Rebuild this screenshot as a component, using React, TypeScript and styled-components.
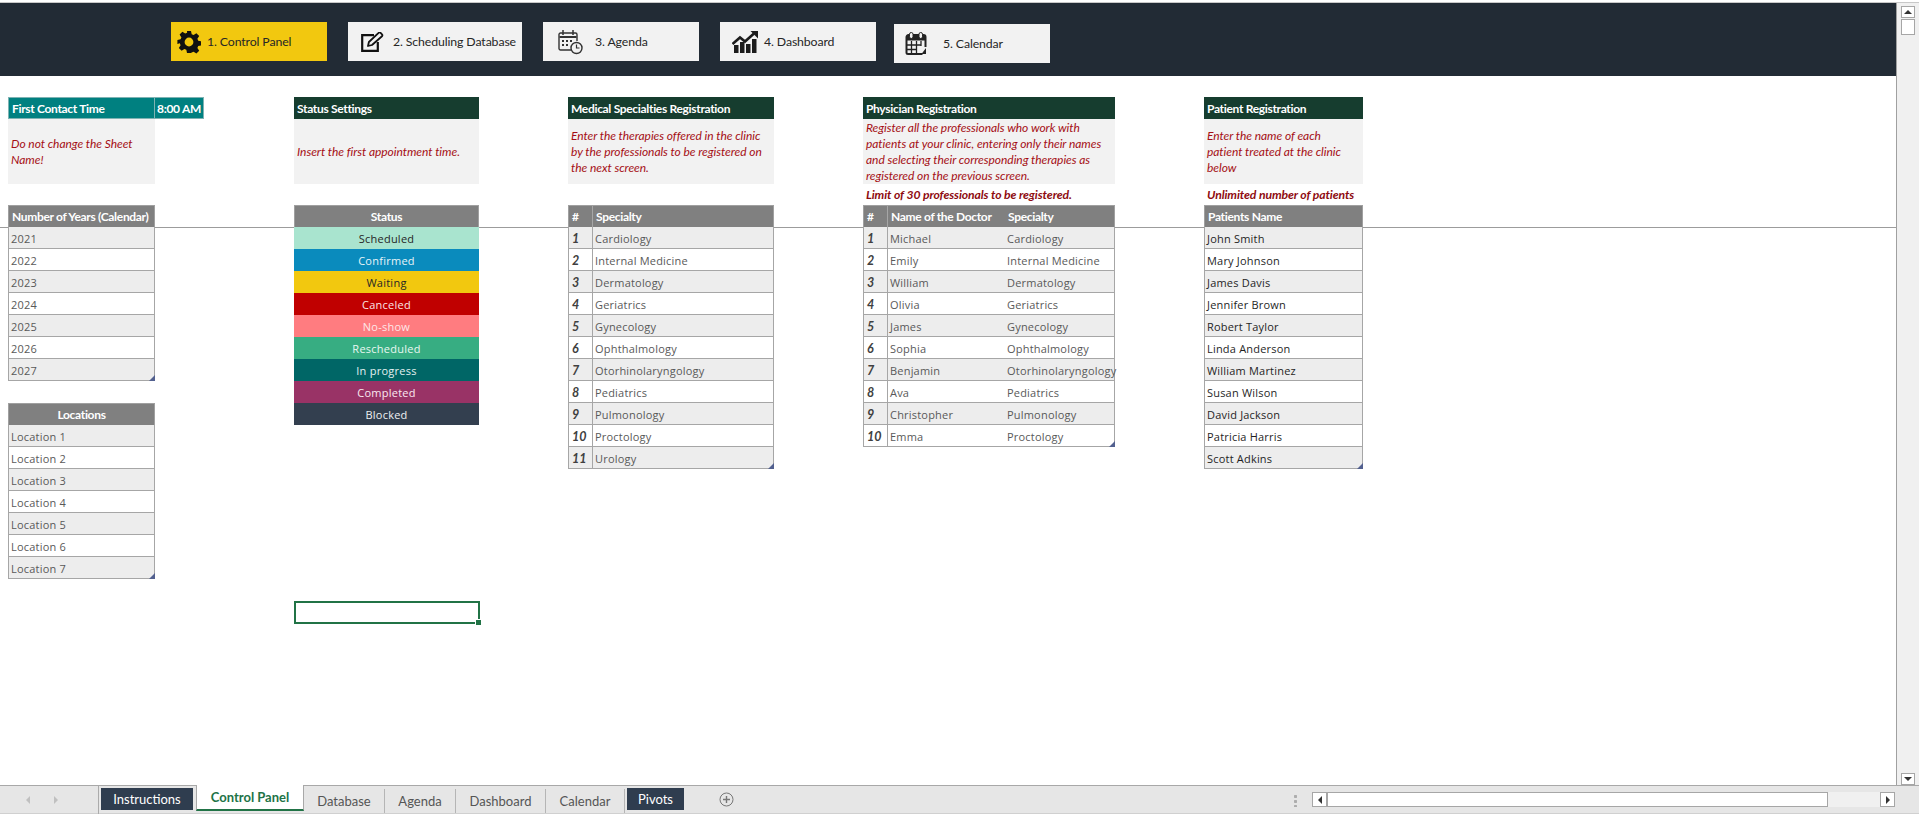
import React from "react";
import styled, { createGlobalStyle, css } from "styled-components";

const Global = createGlobalStyle`
  html, body { margin: 0; padding: 0; height: 100%; overflow: hidden; background: #fff; }
  #root { height: 100%; }
  * { box-sizing: border-box; }
`;
const FONT = `Lato, "Open Sans", "Liberation Sans", sans-serif`;
const BODY = `"Open Sans", "Liberation Sans", sans-serif`;

const Page = styled.div`
  width: 100%; height: 100vh; display: flex; flex-direction: column; background: #fff; font-family: ${FONT}; overflow: hidden;
`;
const Main = styled.div`flex: 1; min-height: 0; display: flex; border-top: 1px solid #c8c8c8; margin-top: 2px;`;
const Sheet = styled.div`
  width: 1897px; display: flex; flex-direction: column; border-right: 1px solid #a0a0a0;
  background: linear-gradient(#9c9c9c, #9c9c9c) 0 224px / 100% 1px no-repeat #fff;
`;
const Banner = styled.div`height: 73px; background: #222b35; display: flex; align-items: flex-start; padding: 19px 0 0 171px; flex: none;`;
const NavButton = styled.div<{ $w: number; $active?: boolean; $drop?: boolean; $pad: number; $gap: number; $after: number }>`
  width: ${p => p.$w}px; height: 39px; flex: none; display: flex; align-items: center;
  margin-right: ${p => p.$after}px; padding-left: ${p => p.$pad}px; gap: ${p => p.$gap}px;
  background: ${p => (p.$active ? "#f2c80f" : "#f2f2f2")};
  color: #262626; font-size: 12.3px; letter-spacing: -0.12px; white-space: nowrap;
  ${p => p.$drop && css`margin-top: 2px;`}
  svg { flex: none; }
`;
const Columns = styled.div`display: flex; gap: 89px; padding: 21px 0 0 8px; align-items: flex-start;`;
const Col = styled.div<{ $w: number }>`width: ${p => p.$w}px; flex: none; display: flex; flex-direction: column;`;
const TitleRow = styled.div`display: flex; height: 22px;`;
const Title = styled.div<{ $teal?: boolean }>`
  height: 22px; flex: none; white-space: nowrap; width: ${p => (p.$teal ? "147px" : "auto")};
  display: flex; align-items: center; padding-left: 3px; color: #fff; font-weight: 700; font-size: 12px; letter-spacing: -0.32px;
  background: ${p => (p.$teal ? "#008080" : "#163d2f")};
  ${p => p.$teal && css`border: 1px solid #7fb3b3;`}
`;
const TimeCell = styled(Title)`width: 49px; background: #008080; border: 1px solid #7fb3b3; border-left: 0; padding-left: 2px;`;
const Note = styled.div<{ $w?: number }>`
  height: 65px; background: #f2f2f2; display: flex; align-items: center; padding: 0 3px;
  width: ${p => (p.$w ? `${p.$w}px` : "auto")};
  color: #a50f15; font-style: italic; font-size: 12px; letter-spacing: -0.05px; line-height: 16px;
`;
const Limit = styled.div`height: 21px; display: flex; align-items: center; padding-left: 3px; white-space: nowrap; color: #8e0b10; font-style: italic; font-weight: 700; font-size: 12.2px; letter-spacing: -0.1px;`;
const Spacer = styled.div`height: 21px;`;
const Table = styled.div<{ $w?: number }>`
  position: relative; width: ${p => (p.$w ? `${p.$w}px` : "auto")}; display: flex; flex-direction: column;
`;
const Head = styled.div<{ $cols?: string; $center?: boolean }>`
  height: 22px; display: grid; grid-template-columns: ${p => p.$cols || "1fr"}; align-items: center; white-space: nowrap;
  background: #808080; color: #fff; font-weight: 700; font-size: 12px; letter-spacing: -0.32px;
  border: 1px solid #a0a0a0; border-bottom: 0;
  text-align: ${p => (p.$center ? "center" : "left")};
`;
const HeadCell = styled.div<{ $pad?: number; $divide?: boolean }>`
  padding-left: ${p => p.$pad ?? 3}px; height: 100%; display: flex; align-items: center;
  ${p => p.$divide && "border-right: 1px solid #a6a6a6;"}
`;
const Row = styled.div<{ $cols?: string; $odd: boolean }>`
  height: 22px; display: grid; grid-template-columns: ${p => p.$cols || "1fr"}; align-items: center;
  background: ${p => (p.$odd ? "#ededed" : "#fff")};
  border: 1px solid #a6a6a6; border-top: 0;
`;
const Cell = styled.div<{ $dark?: boolean; $pad?: number }>`
  height: 100%; display: flex; align-items: center; white-space: nowrap; padding: 1px 0 0 ${p => p.$pad ?? 2}px;
  font-family: ${BODY}; font-size: 11px; letter-spacing: 0.2px; color: ${p => (p.$dark ? "#1f1f1f" : "#595959")};
`;
const NumCell = styled.div`
  height: 100%; display: flex; align-items: center; padding: 1px 0 0 3px; border-right: 1px solid #a6a6a6;
  font-style: italic; font-weight: 700; font-size: 12.5px; color: #404040;
`;
const Resize = styled.span`
  position: absolute; right: 0; bottom: 0; width: 6px; height: 6px; background: #52608f;
  clip-path: polygon(100% 0, 100% 100%, 0 100%);
`;
const SubTable = styled(Table)`margin-top: 22px;`;
const StatusRow = styled.div<{ $bg: string; $fg: string }>`
  height: 22px; display: flex; align-items: center; justify-content: center;
  background: ${p => p.$bg}; color: ${p => p.$fg}; font-family: ${BODY}; font-size: 11px; letter-spacing: 0.25px;
`;
const Selected = styled.div`
  position: relative; margin-top: 176px; height: 23px; width: 186px; margin-left: -0.5px; border: 2px solid #217346;
`;
const Handle = styled.span`position: absolute; right: -3px; bottom: -3px; width: 5px; height: 5px; background: #217346; outline: 1px solid #fff;`;

const VScroll = styled.div`flex: 1; background: #f0f0f0; display: flex; flex-direction: column; align-items: center; padding: 3px 3px 0 2px; gap: 1px;`;
const ArrowBtn = styled.div<{ $dir: "up" | "down" | "left" | "right"; $w?: number; $h?: number }>`
  width: ${p => p.$w ?? 14}px; height: ${p => p.$h ?? 12}px; background: #fff; border: 1px solid #a6a6a6; flex: none;
  display: flex; align-items: center; justify-content: center;
  &::after {
    content: ""; width: 0; height: 0; border-style: solid;
    ${p => p.$dir === "up" && "border-width: 0 4px 4px 4px; border-color: transparent transparent #333 transparent;"}
    ${p => p.$dir === "down" && "border-width: 4px 4px 0 4px; border-color: #333 transparent transparent transparent;"}
    ${p => p.$dir === "left" && "border-width: 4px 4px 4px 0; border-color: transparent #333 transparent transparent;"}
    ${p => p.$dir === "right" && "border-width: 4px 0 4px 4px; border-color: transparent transparent transparent #333;"}
  }
`;
const VThumb = styled.div`width: 14px; height: 16px; background: #fff; border: 1px solid #a6a6a6; flex: none;`;
const VGap = styled.div`flex: 1;`;

const TabBar = styled.div`
  height: 29px; flex: none; display: flex; align-items: flex-start; background: #e6e6e6; border-top: 1px solid #a8a8a8; position: relative; border-bottom: 1px solid #d0d0d0;
`;
const TabNav = styled.div`width: 99px; height: 28px; flex: none; display: flex; align-items: center; gap: 24px; padding-left: 26px; border-right: 1px solid #ababab;`;
const NavTri = styled.span<{ $right?: boolean }>`
  width: 0; height: 0; border-style: solid; border-width: 4px ${p => (p.$right ? "0 4px 4px" : "4px 4px 0")};
  border-color: transparent ${p => (p.$right ? "transparent transparent #c0c0c0" : "#c0c0c0 transparent transparent")};
`;
const Tab = styled.div<{ $w: number; $kind: "dark" | "active" | "plain"; $ml?: number }>`
  width: ${p => p.$w}px; flex: none; display: flex; align-items: center; justify-content: center; font-size: 13px;
  margin-left: ${p => p.$ml ?? 0}px;
  ${p => p.$kind === "dark" && css`height: 22px; margin-top: 2px; background: #2f3d4f; color: #fff;`}
  ${p => p.$kind === "plain" && css`height: 24px; margin-top: 3px; color: #555; border-right: 1px solid #b5b5b5;`}
  ${p => p.$kind === "active" && css`height: 26px; margin-top: -1px; background: #fff; color: #217346; font-weight: 700; border-bottom: 2px solid #217346; border-left: 1px solid #a8a8a8; border-right: 1px solid #a8a8a8;`}
`;
const AddTab = styled.div`margin-left: 35px; margin-top: 6px; width: 15px; height: 15px; flex: none; display: flex;`;
const BarRight = styled.div`margin-left: auto; display: flex; align-items: flex-start; padding-right: 24px;`;
const Dots = styled.div`width: 3px; height: 13px; margin: 8px 15px 0 0; flex: none; background: radial-gradient(circle, #adadad 1.4px, transparent 1.5px) 0 0 / 3px 5px repeat-y;`;
const HTrack = styled.div`display: flex; margin-top: 6px; height: 15px; width: 583px; background: #f0f0f0;`;
const HThumb = styled.div`width: 502px; height: 15px; background: #fff; border: 1px solid #a6a6a6; border-left-width: 2px; margin-left: -1px; flex: none;`;
const HGap = styled.div`flex: 1;`;

const Gear = () => (
  <svg width="24" height="24" viewBox="0 0 24 24"><path fill="#111" fillRule="evenodd" d="M10 1h4l.7 3.2 1.9.8 2.8-1.8 2.800 2.800-1.800 2.800.8 1.900 3.200.7v4l-3.200.7-.8 1.900 1.800 2.800-2.800 2.800-2.800-1.800-1.900.8L14 23h-4l-.7-3.200-1.900-.8-2.800 1.800-2.800-2.800 1.800-2.800-.8-1.900L.4 14v-4l3.200-.7.8-1.900L2.600 4.600l2.800-2.800 2.800 1.800 1.900-.8zM12 7.600a4.400 4.400 0 1 0 0 8.800 4.400 4.400 0 0 0 0-8.800z"/></svg>
);
const EditIcon = () => (
  <svg width="24" height="20" viewBox="0 0 24 20" fill="none"><path d="M13 3.200H1.200v15.600h15.600V10" stroke="#111" strokeWidth="2.200"/><path d="M7 14l.9-4L17.600.9c.6-.6 1.400-.6 2 0l1.400 1.400c.6.6.6 1.400 0 2L11 13z" fill="none" stroke="#111" strokeWidth="1.800" strokeLinejoin="round"/></svg>
);
const AgendaIcon = () => (
  <svg width="25" height="26" viewBox="0 0 25 26" fill="none">
    <path d="M15 21H2.500a1.500 1.500 0 0 1-1.500-1.500V5.500A1.500 1.500 0 0 1 2.500 4h15A1.500 1.500 0 0 1 19 5.500V12" stroke="#333" strokeWidth="1.400"/>
    <path d="M5 1v5M15 1v5" stroke="#333" strokeWidth="1.500"/>
    <path d="M1.500 7h17v2h-17z" fill="#333"/>
    <path d="M4 11h2v2H4zM8 11h2v2H8zM12 11h2v2h-2zM4 15h2v2H4zM8 15h2v2H8z" fill="#333"/>
    <circle cx="18.500" cy="19" r="5.500" fill="#f2f2f2" stroke="#333" strokeWidth="1.400"/>
    <path d="M18.500 15.500V19h3" stroke="#333" strokeWidth="1.200"/>
  </svg>
);
const DashIcon = () => (
  <svg width="26" height="22" viewBox="0 0 26 22"><path fill="#1c1c1c" d="M2 14h4.500v8H2zM8 11h4.500v11H8zM14 13h4.500v9H14zM20 8h4.500v14H20z"/><path d="M0.500 13l7.500-6.500 5 4L22 2.500" fill="none" stroke="#1c1c1c" strokeWidth="2.600"/><path fill="#1c1c1c" d="M18.500 0H26v7.500z"/></svg>
);
const CalIcon = () => (
  <svg width="22" height="23" viewBox="0 0 22 23" fill="none">
    <path d="M20.500 15V5a2 2 0 0 0-2-2h-15a2 2 0 0 0-2 2v15.500a1.500 1.500 0 0 0 1.500 1.500h14.500" stroke="#222" strokeWidth="2"/>
    <path d="M1 4h20v4.500H1z" fill="#222"/>
    <rect x="4.500" y="0.500" width="3.500" height="6" rx="1.700" fill="#f2f2f2" stroke="#222"/>
    <rect x="14" y="0.500" width="3.500" height="6" rx="1.700" fill="#f2f2f2" stroke="#222"/>
    <path d="M1 13h15M1 17.500h10M6.500 9v13M11.500 9v13M16 9v5" stroke="#222" strokeWidth="1.300"/>
    <path d="M21 16l-4.500 6H21z" fill="#222"/>
  </svg>
);
const Plus = () => (
  <svg width="15" height="15" viewBox="0 0 15 15" fill="none"><circle cx="7.500" cy="7.500" r="6.500" stroke="#777" strokeWidth="1"/><path d="M7.500 4v7M4 7.500h7" stroke="#777" strokeWidth="1.400"/></svg>
);

const years = ["2021", "2022", "2023", "2024", "2025", "2026", "2027"];
const locations = [1, 2, 3, 4, 5, 6, 7].map(n => `Location ${n}`);
const statuses: [string, string, string][] = [
  ["Scheduled", "#a9e4cf", "#262626"], ["Confirmed", "#0a8bbd", "#e8f4f8"], ["Waiting", "#f2c80f", "#262626"],
  ["Canceled", "#c00000", "#fbe5e5"], ["No-show", "#ff7c80", "#fde8e8"], ["Rescheduled", "#37ad82", "#e9f7f1"],
  ["In progress", "#006666", "#e3f1f1"], ["Completed", "#993366", "#fae9f1"], ["Blocked", "#333f4f", "#eef0f2"],
];
const specialties = ["Cardiology", "Internal Medicine", "Dermatology", "Geriatrics", "Gynecology", "Ophthalmology", "Otorhinolaryngology", "Pediatrics", "Pulmonology", "Proctology", "Urology"];
const doctors = ["Michael", "Emily", "William", "Olivia", "James", "Sophia", "Benjamin", "Ava", "Christopher", "Emma"];
const patients = ["John Smith", "Mary Johnson", "James Davis", "Jennifer Brown", "Robert Taylor", "Linda Anderson", "William Martinez", "Susan Wilson", "David Jackson", "Patricia Harris", "Scott Adkins"];

const SPEC_COLS = "24px 1fr";
const DOC_COLS = "24px 117px 1fr";

export default function App() {
  return (
    <Page>
      <Global />
      <Main>
        <Sheet>
          <Banner>
            <NavButton $w={156} $active $pad={6} $gap={6} $after={21}><Gear />1. Control Panel</NavButton>
            <NavButton $w={174} $pad={13} $gap={8} $after={21}><EditIcon />2. Scheduling Database</NavButton>
            <NavButton $w={156} $pad={15} $gap={12} $after={21}><AgendaIcon />3. Agenda</NavButton>
            <NavButton $w={156} $pad={12} $gap={6} $after={18}><DashIcon />4. Dashboard</NavButton>
            <NavButton $w={156} $drop $pad={11} $gap={16} $after={0}><CalIcon />5. Calendar</NavButton>
          </Banner>
          <Columns>
            <Col $w={197}>
              <TitleRow><Title $teal>First Contact Time</Title><TimeCell>8:00 AM</TimeCell></TitleRow>
              <Note $w={147}>Do not change the Sheet Name!</Note>
              <Spacer />
              <Table $w={147}>
                <Head><HeadCell>Number of Years (Calendar)</HeadCell></Head>
                {years.map((y, i) => <Row key={y} $odd={i % 2 === 0}><Cell>{y}</Cell></Row>)}
                <Resize />
              </Table>
              <SubTable $w={147}>
                <Head $center>Locations</Head>
                {locations.map((l, i) => <Row key={l} $odd={i % 2 === 0}><Cell>{l}</Cell></Row>)}
                <Resize />
              </SubTable>
            </Col>
            <Col $w={185}>
              <Title>Status Settings</Title>
              <Note>Insert the first appointment time.</Note>
              <Spacer />
              <Table>
                <Head $center>Status</Head>
                {statuses.map(([n, bg, fg]) => <StatusRow key={n} $bg={bg} $fg={fg}>{n}</StatusRow>)}
              </Table>
              <Selected><Handle /></Selected>
            </Col>
            <Col $w={206}>
              <Title>Medical Specialties Registration</Title>
              <Note><span>Enter the therapies offered in the clinic<br />by the professionals to be registered on<br />the next screen.</span></Note>
              <Spacer />
              <Table>
                <Head $cols={SPEC_COLS}><HeadCell $divide>#</HeadCell><HeadCell>Specialty</HeadCell></Head>
                {specialties.map((s, i) => (
                  <Row key={s} $cols={SPEC_COLS} $odd={i % 2 === 0}><NumCell>{i + 1}</NumCell><Cell>{s}</Cell></Row>
                ))}
                <Resize />
              </Table>
            </Col>
            <Col $w={252}>
              <Title>Physician Registration</Title>
              <Note><span>Register all the professionals who work with<br />patients at your clinic, entering only their names<br />and selecting their corresponding therapies as<br />registered on the previous screen.</span></Note>
              <Limit>Limit of 30 professionals to be registered.</Limit>
              <Table>
                <Head $cols={DOC_COLS}><HeadCell $divide>#</HeadCell><HeadCell>Name of the Doctor</HeadCell><HeadCell>Specialty</HeadCell></Head>
                {doctors.map((d, i) => (
                  <Row key={d} $cols={DOC_COLS} $odd={i % 2 === 0}>
                    <NumCell>{i + 1}</NumCell><Cell $pad={2}>{d}</Cell><Cell $pad={2}>{specialties[i]}</Cell>
                  </Row>
                ))}
                <Resize />
              </Table>
            </Col>
            <Col $w={159}>
              <Title>Patient Registration</Title>
              <Note><span>Enter the name of each<br />patient treated at the clinic<br />below</span></Note>
              <Limit>Unlimited number of patients</Limit>
              <Table>
                <Head><HeadCell>Patients Name</HeadCell></Head>
                {patients.map((p, i) => <Row key={p} $odd={i % 2 === 0}><Cell $dark>{p}</Cell></Row>)}
                <Resize />
              </Table>
            </Col>
          </Columns>
        </Sheet>
        <VScroll>
          <ArrowBtn $dir="up" />
          <VThumb />
          <VGap />
          <ArrowBtn $dir="down" />
        </VScroll>
      </Main>
      <TabBar>
        <TabNav><NavTri /><NavTri $right /></TabNav>
        <Tab $kind="dark" $w={92} $ml={2}>Instructions</Tab>
        <Tab $kind="active" $w={108} $ml={3}>Control Panel</Tab>
        <Tab $kind="plain" $w={81}>Database</Tab>
        <Tab $kind="plain" $w={71}>Agenda</Tab>
        <Tab $kind="plain" $w={90}>Dashboard</Tab>
        <Tab $kind="plain" $w={79}>Calendar</Tab>
        <Tab $kind="dark" $w={57} $ml={2}>Pivots</Tab>
        <AddTab><Plus /></AddTab>
        <BarRight>
          <Dots />
          <HTrack>
            <ArrowBtn $dir="left" $w={15} $h={15} />
            <HThumb />
            <HGap />
            <ArrowBtn $dir="right" $w={15} $h={15} />
          </HTrack>
        </BarRight>
      </TabBar>
    </Page>
  );
}
